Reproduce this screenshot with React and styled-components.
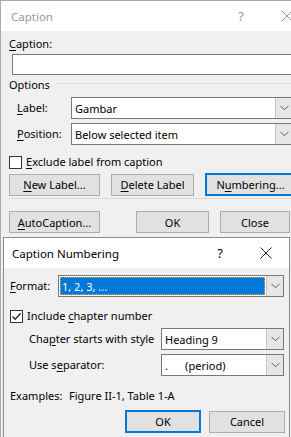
import React from 'react';
import styled, { createGlobalStyle } from 'styled-components';

const GlobalStyle = createGlobalStyle`
    html, body {
        margin: 0;
        padding: 0;
        width: 291px;
        height: 437px;
        overflow: hidden;
        background: #f0f0f0;
        font-family: "Noto Sans", "Open Sans", sans-serif;
        font-size: 11px;
        color: #000;
    }
`

const Stage = styled.div`
    position: relative;
    width: 291px;
    height: 437px;
    overflow: hidden;
`

const Window = styled.div`
    width: 330px;
    height: 437px;
    background: #f0f0f0;
    border-top: 1px solid #aaaaaa;
    border-left: 1px solid #aaaaaa;
    box-sizing: border-box;
`

// the child dialog floats over the Caption dialog
const FloatWindow = styled.div`
    position: absolute;
    left: 3px;
    top: 237px;
    width: 287px;
    height: 220px;
    background: #f0f0f0;
    border: 1px solid #8c8c8c;
    box-sizing: border-box;
`

const TitleBar = styled.div`
    height: ${p => p.$h}px;
    background: #fff;
    display: flex;
    align-items: center;
    padding-left: ${p => p.$pl}px;
    color: ${p => p.$inactive ? '#999999' : '#000'};
    font-size: 11.5px;
`

const TitleText = styled.div`
    flex: 1;
`

const TitleIcon = styled.div`
    width: ${p => p.$w}px;
    font-size: 13px;
    display: flex;
    justify-content: center;
`

const Body = styled.div`
    padding-left: ${p => p.$pl}px;
    display: flex;
    flex-direction: column;
`

const Text = styled.div`
    height: 16px;
    line-height: 16px;
    margin-top: ${p => p.$mt || 0}px;
    width: ${p => p.$w ? p.$w + 'px' : 'auto'};
    flex-shrink: 0;
    white-space: nowrap;
`

const U = styled.span`
    text-decoration: underline;
    text-underline-offset: 2px;
`

const TextBox = styled.div`
    height: 21px;
    margin-top: ${p => p.$mt}px;
    margin-left: ${p => p.$ml}px;
    background: #fff;
    border: 1px solid #7a7a7a;
    box-sizing: border-box;
`

const GroupHead = styled.div`
    display: flex;
    align-items: center;
    margin-top: ${p => p.$mt}px;
    height: 16px;
`

const GroupLine = styled.div`
    flex: 1;
    height: 1px;
    background: #dcdcdc;
    margin-left: 7px;
    margin-top: -2px;
`

const Row = styled.div`
    display: flex;
    align-items: center;
    margin-top: ${p => p.$mt || 0}px;
    margin-left: ${p => p.$ml || 0}px;
    gap: ${p => p.$gap || 0}px;
`

const Combo = styled.div`
    display: flex;
    width: ${p => p.$w}px;
    height: 22px;
    border: 1px solid #7a7a7a;
    background: #fff;
    box-sizing: border-box;
    flex-shrink: 0;
`

const ComboValue = styled.div`
    flex: 1;
    display: flex;
    align-items: center;
    padding-left: 3px;
    white-space: nowrap;
`

const Selected = styled.div`
    flex: 1;
    margin: 1px;
    background: #0078d7;
    color: #fff;
    outline: 1px dotted #f5a623;
    outline-offset: -1px;
    display: flex;
    align-items: center;
    padding-left: 2px;
`

const ComboButton = styled.div`
    width: 16px;
    border-left: 1px solid #c8c8c8;
    background: #e6e6e6;
    display: flex;
    align-items: center;
    justify-content: center;
`

const CheckBox = styled.div`
    width: 13px;
    height: 13px;
    border: 1px solid #333;
    background: #fff;
    box-sizing: border-box;
    display: flex;
    align-items: center;
    justify-content: center;
    flex-shrink: 0;
`

const Button = styled.div`
    width: ${p => p.$w}px;
    height: ${p => p.$focus ? 23 : 22}px;
    box-sizing: border-box;
    border: ${p => p.$focus ? '2px solid #0078d7' : '1px solid #adadad'};
    background: #e1e1e1;
    display: flex;
    align-items: center;
    justify-content: center;
    flex-shrink: 0;
    white-space: nowrap;
`

const Separator = styled.div`
    height: 1px;
    background: #d9d9d9;
    margin-top: ${p => p.$mt}px;
`

const Chevron = () => (
    <svg width="9" height="6" viewBox="0 0 9 6">
        <path d="M0.5 0.8 L4.5 4.8 L8.5 0.8" fill="none" stroke="#5a5a5a" strokeWidth="1" />
    </svg>
)

const Check = () => (
    <svg width="11" height="11" viewBox="0 0 11 11">
        <path d="M1.5 5.5 L4.2 8.3 L9.6 2.2" fill="none" stroke="#222" strokeWidth="1.3" />
    </svg>
)

const Close = ({ color }) => (
    <svg width="12" height="12" viewBox="0 0 12 12">
        <path d="M0.5 0.5 L11.5 11.5 M11.5 0.5 L0.5 11.5" stroke={color} strokeWidth="1" />
    </svg>
)

const App = () => {
    return (<Stage>
        <GlobalStyle />
        <Window>
            <TitleBar $h={30} $pl={10} $inactive>
                <TitleText>Caption</TitleText>
                <TitleIcon $w={46}>?</TitleIcon>
                <TitleIcon $w={46}><Close color="#999" /></TitleIcon>
                <TitleIcon $w={20} />
            </TitleBar>
            <Body $pl={8}>
                <Text $mt={5}><U>C</U>aption:</Text>
                <TextBox $mt={2} $ml={3} />
                <GroupHead $mt={1}>
                    Options
                    <GroupLine />
                </GroupHead>
                <Row $mt={5} $ml={8}>
                    <Text $w={54}><U>L</U>abel:</Text>
                    <Combo $w={222}>
                        <ComboValue>Gambar</ComboValue>
                        <ComboButton><Chevron /></ComboButton>
                    </Combo>
                </Row>
                <Row $mt={4} $ml={8}>
                    <Text $w={54}><U>P</U>osition:</Text>
                    <Combo $w={222}>
                        <ComboValue>Below selected item</ComboValue>
                        <ComboButton><Chevron /></ComboButton>
                    </Combo>
                </Row>
                <Row $mt={9} $gap={4}>
                    <CheckBox />
                    <Text><U>E</U>xclude label from caption</Text>
                </Row>
                <Row $mt={3} $gap={11}>
                    <Button $w={91}><U>N</U>ew Label...</Button>
                    <Button $w={83}><U>D</U>elete Label</Button>
                    <Button $w={91} $focus>N<U>u</U>mbering...</Button>
                </Row>
                <Separator $mt={2} />
                <Row $mt={12} $gap={36}>
                    <Button $w={91}><U>A</U>utoCaption...</Button>
                    <Row $gap={11}>
                        <Button $w={73}>OK</Button>
                        <Button $w={70}>Close</Button>
                    </Row>
                </Row>
            </Body>
        </Window>

        <FloatWindow>
            <TitleBar $h={30} $pl={8}>
                <TitleText>Caption Numbering</TitleText>
                <TitleIcon $w={46}>?</TitleIcon>
                <TitleIcon $w={46}><Close color="#222" /></TitleIcon>
            </TitleBar>
            <Body $pl={6}>
                <Row $mt={7}>
                    <Text $w={48}><U>F</U>ormat:</Text>
                    <Combo $w={226}>
                        <Selected>1, 2, 3, ...</Selected>
                        <ComboButton><Chevron /></ComboButton>
                    </Combo>
                </Row>
                <Row $mt={11} $gap={4}>
                    <CheckBox><Check /></CheckBox>
                    <Text>Include <U>c</U>hapter number</Text>
                </Row>
                <Row $mt={4} $ml={19}>
                    <Text $w={132}>Cha<U>p</U>ter starts with style</Text>
                    <Combo $w={123}>
                        <ComboValue>Heading 9</ComboValue>
                        <ComboButton><Chevron /></ComboButton>
                    </Combo>
                </Row>
                <Row $mt={4} $ml={19}>
                    <Text $w={132}>Use s<U>e</U>parator:</Text>
                    <Combo $w={123}>
                        <ComboValue>.&nbsp;&nbsp;&nbsp;&nbsp;&nbsp;&nbsp;(period)</ComboValue>
                        <ComboButton><Chevron /></ComboButton>
                    </Combo>
                </Row>
                <Row $mt={12}>
                    <Text $w={59}>Examples:</Text>
                    <Text>Figure II-1, Table 1-A</Text>
                </Row>
                <Row $mt={6} $ml={115} $gap={8}>
                    <Button $w={76} $focus>OK</Button>
                    <Button $w={76}>Cancel</Button>
                </Row>
            </Body>
        </FloatWindow>
    </Stage>);
}

export default App;
